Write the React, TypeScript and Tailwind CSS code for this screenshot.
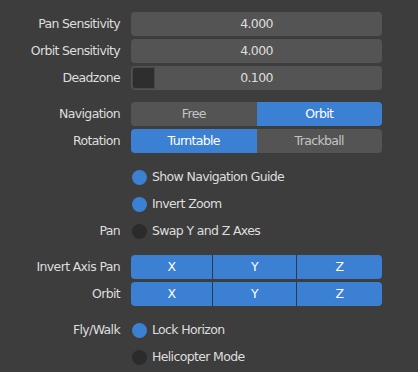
import React from "react";

const font = { fontFamily: '"DejaVu Sans", "Liberation Sans", sans-serif' };

function Row({ label, children }: { label?: string; children: React.ReactNode }) {
  return (
    <div className="flex h-[24px] items-center">
      <div className="w-[120px] shrink-0 text-right text-[#dedede] pr-0">{label ?? ""}</div>
      <div className="ml-[11px] w-[251px] h-full flex items-center">{children}</div>
    </div>
  );
}

function NumField({ value, fill }: { value: string; fill?: number }) {
  return (
    <div className="relative w-full h-full rounded-[4px] bg-[#545454] flex items-center justify-center text-[#dedede]">
      {fill !== undefined && (
        <div
          className="absolute left-[1px] top-[1px] bottom-[1px] rounded-l-[3px] bg-[#2e2e2e] border border-[#474747]"
          style={{ width: `${fill}px` }}
        />
      )}
      <span className="relative">{value}</span>
    </div>
  );
}

function Seg({ items, active }: { items: string[]; active: number }) {
  return (
    <div className="flex w-full h-full rounded-[4px] overflow-hidden">
      {items.map((t, i) => (
        <div
          key={t}
          className={
            "flex-1 flex items-center justify-center " +
            (i === active ? "bg-[#3b80d3] text-white" : "bg-[#545454] text-[#c4c4c4]")
          }
        >
          {t}
        </div>
      ))}
    </div>
  );
}

function Axes() {
  return (
    <div className="flex w-full h-full rounded-[4px] overflow-hidden bg-[#3b80d3] text-white">
      <div className="w-[82px] flex items-center justify-center border-r border-[#2f3a48]">X</div>
      <div className="w-[84px] flex items-center justify-center border-r border-[#2f3a48]">Y</div>
      <div className="flex-1 flex items-center justify-center">Z</div>
    </div>
  );
}

function Check({ on, text }: { on: boolean; text: string }) {
  return (
    <div className="flex items-center h-full">
      <div
        className={
          "w-[15px] h-[15px] rounded-full ml-[1px] " + (on ? "bg-[#3b80d3]" : "bg-[#2b2b2b]")
        }
      />
      <span className="ml-[5px] text-[#dedede]">{text}</span>
    </div>
  );
}

export default function App() {
  return (
    <div
      className="w-[418px] h-[372px] bg-[#3d3d3d] text-[12.5px] tracking-[-0.65px] pt-[12px] flex flex-col gap-[12px] overflow-hidden"
      style={font}
    >
      <div className="flex flex-col gap-[3px]">
        <Row label="Pan Sensitivity"><NumField value="4.000" /></Row>
        <Row label="Orbit Sensitivity"><NumField value="4.000" /></Row>
        <Row label="Deadzone"><NumField value="0.100" fill={23} /></Row>
      </div>
      <div className="flex flex-col gap-[3px]">
        <Row label="Navigation"><Seg items={["Free", "Orbit"]} active={1} /></Row>
        <Row label="Rotation"><Seg items={["Turntable", "Trackball"]} active={0} /></Row>
      </div>
      <div className="flex flex-col gap-[3px]">
        <Row><Check on text="Show Navigation Guide" /></Row>
        <Row><Check on text="Invert Zoom" /></Row>
        <Row label="Pan"><Check on={false} text="Swap Y and Z Axes" /></Row>
      </div>
      <div className="flex flex-col gap-[3px]">
        <Row label="Invert Axis Pan"><Axes /></Row>
        <Row label="Orbit"><Axes /></Row>
      </div>
      <div className="flex flex-col gap-[3px]">
        <Row label="Fly/Walk"><Check on text="Lock Horizon" /></Row>
        <Row><Check on={false} text="Helicopter Mode" /></Row>
      </div>
    </div>
  );
}
